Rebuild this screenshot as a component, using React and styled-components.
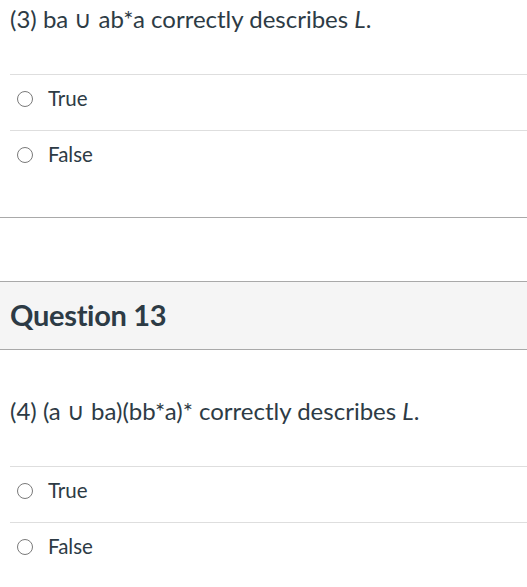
import React from 'react';
import styled, { createGlobalStyle } from 'styled-components';

const GlobalStyle = createGlobalStyle`
  body {
    margin: 0;
    background: #ffffff;
    font-family: Lato, 'Open Sans', sans-serif;
    color: #2d3b45;
  }
`;

// Styled Components

const Page = styled.div`
  width: 527px;
  display: flex;
  flex-direction: column;
`;

const QuestionBlock = styled.section`
  display: flex;
  flex-direction: column;
  margin-block-end: 63px;
`;

const QuestionHeader = styled.header`
  display: flex;
  align-items: center;
  box-sizing: border-box;
  height: 69px;
  padding-inline-start: 10px;
  padding-block-end: 3px;
  background-color: #f5f5f5;
  border-top: 1px solid #a9a9a9;
  border-bottom: 1px solid #a9a9a9;
`;

const QuestionName = styled.h2`
  margin: 0;
  font-size: 29px;
  font-weight: 700;
  letter-spacing: -0.3px;
`;

const QuestionBody = styled.div`
  display: flex;
  flex-direction: column;
  padding-block-start: ${(props) => (props.cropped ? '4px' : '46px')};
  padding-block-end: 31px;
  border-bottom: 1px solid #a9a9a9;
`;

const QuestionText = styled.p`
  margin: 0 0 40px 10px;
  font-size: 24px;
  line-height: 30px;

  & em {
    font-style: italic;
  }
`;

const Answers = styled.ul`
  list-style: none;
  margin: 0 0 0 10px;
  padding: 0;
`;

const Answer = styled.li`
  display: flex;
  align-items: center;
  gap: 15px;
  height: 56px;
  padding-inline-start: 7px;
  padding-block-end: 9px;
  box-sizing: border-box;
  border-top: 1px solid #dedede;
  font-size: 20.5px;
`;

const Radio = styled.span`
  width: 16px;
  height: 16px;
  margin-block-start: 2px;
  box-sizing: border-box;
  border: 1.5px solid #7a7a7a;
  border-radius: 50%;
  flex-shrink: 0;
`;

// Components

const Question = ({ number, text, cropped }) => (
  <QuestionBlock>
    {number && (
      <QuestionHeader>
        <QuestionName>{`Question ${number}`}</QuestionName>
      </QuestionHeader>
    )}
    <QuestionBody cropped={cropped}>
      <QuestionText>
        {text} correctly describes <em>L</em>.
      </QuestionText>
      <Answers>
        {['True', 'False'].map((label) => (
          <Answer key={label}>
            <Radio />
            {label}
          </Answer>
        ))}
      </Answers>
    </QuestionBody>
  </QuestionBlock>
);

const App = () => (
  <Page>
    <GlobalStyle />
    <Question cropped text="(3) ba ∪ ab*a" />
    <Question number={13} text="(4) (a ∪ ba)(bb*a)*" />
  </Page>
);

export default App;
